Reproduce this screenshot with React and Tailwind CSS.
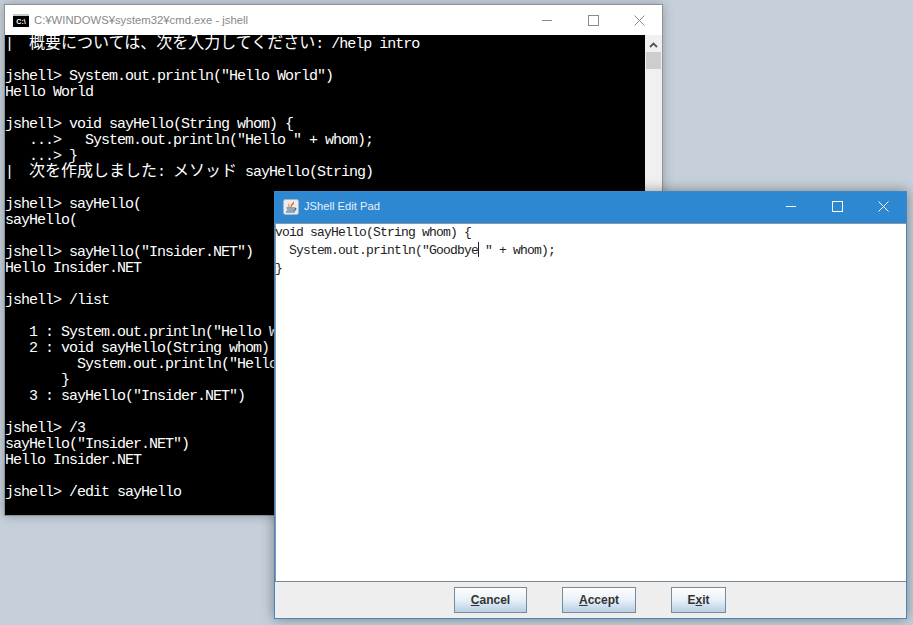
const terminalLines = [
  <>|  <Jp>概要については、次を入力してください</Jp>: /help intro</>,
  '',
  'jshell> System.out.println("Hello World")',
  'Hello World',
  '',
  'jshell> void sayHello(String whom) {',
  '   ...>   System.out.println("Hello " + whom);',
  '   ...> }',
  <>|  <Jp>次を作成しました</Jp>: <Jp>メソッド</Jp> sayHello(String)</>,
  '',
  'jshell> sayHello(',
  'sayHello(',
  '',
  'jshell> sayHello("Insider.NET")',
  'Hello Insider.NET',
  '',
  'jshell> /list',
  '',
  '   1 : System.out.println("Hello World")',
  '   2 : void sayHello(String whom) {',
  '         System.out.println("Hello " + whom);',
  '       }',
  '   3 : sayHello("Insider.NET")',
  '',
  'jshell> /3',
  'sayHello("Insider.NET")',
  'Hello Insider.NET',
  '',
  'jshell> /edit sayHello',
  '',
];

function Jp({ children }) {
  return <span className="font-['Noto_Sans_CJK_JP',sans-serif] text-[16px] leading-[10px] tracking-normal">{children}</span>;
}

function CmdIcon() {
  return (
    <div className="w-4 h-[13px] bg-black border-t-2 border-[#c8c8c8] flex items-center justify-center overflow-hidden">
      <span className="text-white text-[7px] leading-none font-bold font-['Liberation_Sans',sans-serif]">C:\</span>
    </div>
  );
}

function JavaIcon() {
  return (
    <svg width="16" height="16" viewBox="0 0 16 16">
      <rect x="0.5" y="0.5" width="15" height="15" rx="2" fill="#ececec" stroke="#a9b4c0" />
      <path d="M10.5 2 C11 4 8 4.5 7.5 7 C7.2 8 8 8.5 8.5 8.5 C8 7 10.5 6 11 4 C11.2 3.2 11 2.5 10.5 2 Z" fill="#e8641e" />
      <path d="M6 4.5 C5 6 5.5 7.5 6.5 8.2" stroke="#f0a060" strokeWidth="1.2" fill="none" />
      <path d="M3.5 9 H11 M4 11 H10.5 M3 13 H12 M11 9 C13.5 9 13.5 11.2 10.5 11.4" stroke="#33648e" strokeWidth="1.2" fill="none" />
    </svg>
  );
}

// min / max / close glyphs, same for both windows apart from colour
function WindowControls({ lineClass, borderClass, strokeColor }) {
  return (
    <div className="ml-auto flex items-center">
      <div className="w-[46px] flex justify-center"><div className={`w-[10px] h-px ${lineClass}`} /></div>
      <div className="w-[46px] flex justify-center"><div className={`w-[11px] h-[11px] border ${borderClass}`} /></div>
      <div className="w-[46px] flex justify-center">
        <svg width="11" height="11" viewBox="0 0 11 11">
          <path d="M0.5 0.5 L10.5 10.5 M10.5 0.5 L0.5 10.5" stroke={strokeColor} strokeWidth="1" fill="none" />
        </svg>
      </div>
    </div>
  );
}

function JavaButton({ width, children }) {
  return (
    <button className={`${width} h-[26px] border border-[#7a8a99] bg-gradient-to-b from-white via-[#e8f0f8] to-[#b8cfe5] text-[12px] font-bold text-[#333333] font-['Liberation_Sans',sans-serif]`}>
      {children}
    </button>
  );
}

export default function App() {
  return (
    <div className="relative w-[913px] h-[625px] overflow-hidden bg-[#c6d0da]">
      {/* console window */}
      <div className="absolute left-[4px] top-[4px] w-[659px] h-[512px] border border-[#8d9298] bg-white shadow-[0_0_10px_rgba(0,0,0,0.25)] flex flex-col">
        <div className="h-[30px] flex items-center pl-[8px] shrink-0">
          <CmdIcon />
          <span className="ml-[5px] text-[11.3px] text-[#888888] font-['Liberation_Sans',sans-serif]">C:¥WINDOWS¥system32¥cmd.exe - jshell</span>
          <WindowControls lineClass="bg-[#8a8a8a]" borderClass="border-[#8a8a8a]" strokeColor="#8a8a8a" />
        </div>
        <div className="flex-1 flex min-h-0">
          <div className="flex-1 bg-black text-white pt-[2px] font-['Liberation_Mono',monospace] text-[15px] tracking-[-1px] overflow-hidden">
            {terminalLines.map((line, i) => (
              <div key={i} className={typeof line === 'string' ? 'h-4 leading-4 whitespace-pre' : 'h-4 leading-4 whitespace-pre -mt-px mb-px'}>{line}</div>
            ))}
          </div>
          <div className="w-[17px] bg-[#f0f0f0] flex flex-col items-center">
            <svg width="9" height="6" viewBox="0 0 9 6" className="mt-[7px]">
              <path d="M1 5 L4.5 1.5 L8 5" stroke="#555555" strokeWidth="1.8" fill="none" />
            </svg>
            <div className="w-[15px] h-[17px] mt-[4px] bg-[#cdcdcd]" />
          </div>
        </div>
      </div>

      {/* edit pad window */}
      <div className="absolute left-[274px] top-[191px] w-[633px] h-[428px] border border-[#3f88c5] bg-[#eeeeee] shadow-[0_0_12px_rgba(0,0,0,0.4)] flex flex-col">
        <div className="h-[31px] bg-[#2d87d1] flex items-center pl-[8px] pb-[2px] shrink-0">
          <JavaIcon />
          <span className="ml-[5px] text-[11.2px] text-[#e8f2fb] font-['Liberation_Sans',sans-serif]">JShell Edit Pad</span>
          <WindowControls lineClass="bg-white" borderClass="border-white" strokeColor="#ffffff" />
        </div>
        <div className="flex-1 bg-white border-t border-[#8a96a3] shadow-[inset_1px_0_0_#8a96a3] font-['Liberation_Mono',monospace] text-[13px] tracking-[-0.8px] text-[#222222]">
          <div className="h-[18px] leading-[18px] whitespace-pre">void sayHello(String whom) {'{'}</div>
          <div className="h-[18px] leading-[18px] whitespace-pre">  System.out.println("Goodbye<span className="inline-block w-px -mr-px h-[15px] align-[-3px] bg-[#222222]" /> " + whom);</div>
          <div className="h-[18px] leading-[18px] whitespace-pre">{'}'}</div>
        </div>
        <div className="h-[37px] border-t border-[#7a8a99] flex items-center justify-center gap-[35px] shrink-0 pr-[1px]">
          <JavaButton width="w-[73px]"><u>C</u>ancel</JavaButton>
          <JavaButton width="w-[74px]"><u>A</u>ccept</JavaButton>
          <JavaButton width="w-[55px]">E<u>x</u>it</JavaButton>
        </div>
      </div>
    </div>
  );
}
